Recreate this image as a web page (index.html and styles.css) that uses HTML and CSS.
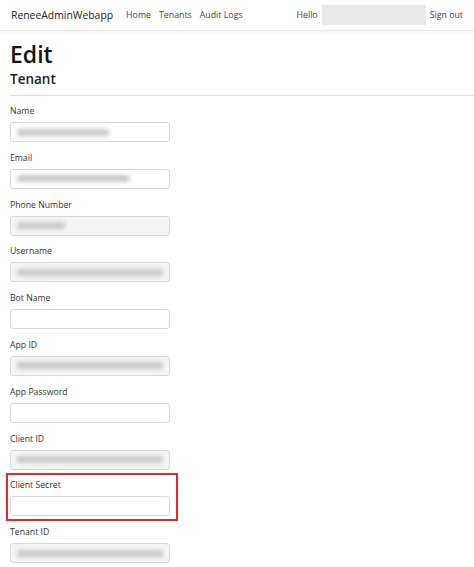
FILE: index.html
```html
<!DOCTYPE html>
<html>
<head>
<meta charset="utf-8">
<link rel="stylesheet" href="styles.css">
</head>
<body>
<header class="navbar">
  <a class="brand">ReneeAdminWebapp</a>
  <nav class="links">
    <a>Home</a>
    <a>Tenants</a>
    <a>Audit Logs</a>
  </nav>
  <div class="user">
    <span>Hello</span>
    <span class="blur-box user-mail"></span>
    <a>Sign out</a>
  </div>
</header>
<main class="container">
  <h1 class="title">Edit</h1>
  <h4 class="subtitle">Tenant</h4>
  <hr class="rule">
  <form class="form">
    <div class="group"><label>Name</label><div class="input"><span class="blur" style="width:92px"></span></div></div>
    <div class="group"><label>Email</label><div class="input"><span class="blur" style="width:112px"></span></div></div>
    <div class="group"><label>Phone Number</label><div class="input filled"><span class="blur" style="width:48px"></span></div></div>
    <div class="group"><label>Username</label><div class="input filled"><span class="blur" style="width:146px"></span></div></div>
    <div class="group"><label>Bot Name</label><div class="input"></div></div>
    <div class="group"><label>App ID</label><div class="input filled"><span class="blur" style="width:146px"></span></div></div>
    <div class="group"><label>App Password</label><div class="input"></div></div>
    <div class="group"><label>Client ID</label><div class="input filled"><span class="blur" style="width:146px"></span></div></div>
    <div class="group highlight"><label>Client Secret</label><div class="input"></div></div>
    <div class="group"><label>Tenant ID</label><div class="input filled"><span class="blur" style="width:146px"></span></div></div>
  </form>
</main>
</body>
</html>
```
FILE: styles.css
```css
html, body {
  margin: 0;
  padding: 0;
  background: #fff;
}
body {
  font-family: "Open Sans", "Noto Sans", sans-serif;
  color: #212529;
  overflow: hidden;
}
.navbar {
  height: 30px;
  display: flex;
  align-items: center;
  padding: 0 11px;
  border-bottom: 1px solid #e6e6e6;
  box-shadow: 0 1px 3px rgba(0,0,0,0.05);
  font-size: 8.8px;
  color: #444;
}
.brand {
  font-size: 10.4px;
  color: #222;
  margin-right: 13px;
}
.links {
  display: flex;
  gap: 8px;
}
.user {
  margin-left: auto;
  display: flex;
  align-items: center;
  gap: 4px;
}
.user-mail {
  display: inline-block;
  width: 104px;
  height: 20px;
  background: #e9e9e9;
}
.container {
  padding: 0 10px;
}
.title {
  font-size: 23px;
  font-weight: 600;
  margin: 8px 0 0;
  line-height: 30px;
  color: #151515;
}
.subtitle {
  font-size: 13.5px;
  font-weight: 600;
  margin: 1px 0 0;
  line-height: 18px;
  color: #222;
}
.rule {
  border: 0;
  border-top: 1px solid #dedede;
  margin: 7px -10px 0 0;
}
.form {
  display: flex;
  flex-direction: column;
  padding-top: 8px;
}
.group {
  display: flex;
  flex-direction: column;
  height: 46.8px;
  position: relative;
}
.group label {
  font-size: 8.7px;
  line-height: 11px;
  height: 16px;
  padding-top: 2px;
  color: #333;
}
.input {
  height: 18px;
  border: 1px solid #d7d7d7;
  border-radius: 3px;
  background: #fff;
  display: flex;
  align-items: center;
  padding-left: 6px;
  box-sizing: content-box;
  width: 152px;
}
.input.filled {
  background: #f4f4f4;
}
.blur {
  display: block;
  height: 7px;
  background: #c9c9c9;
  filter: blur(2px);
  border-radius: 2px;
}
.highlight::before {
  content: "";
  position: absolute;
  left: -4px;
  top: -5px;
  width: 168px;
  height: 44px;
  border: 2px solid #e0282e;
  pointer-events: none;
}
```
